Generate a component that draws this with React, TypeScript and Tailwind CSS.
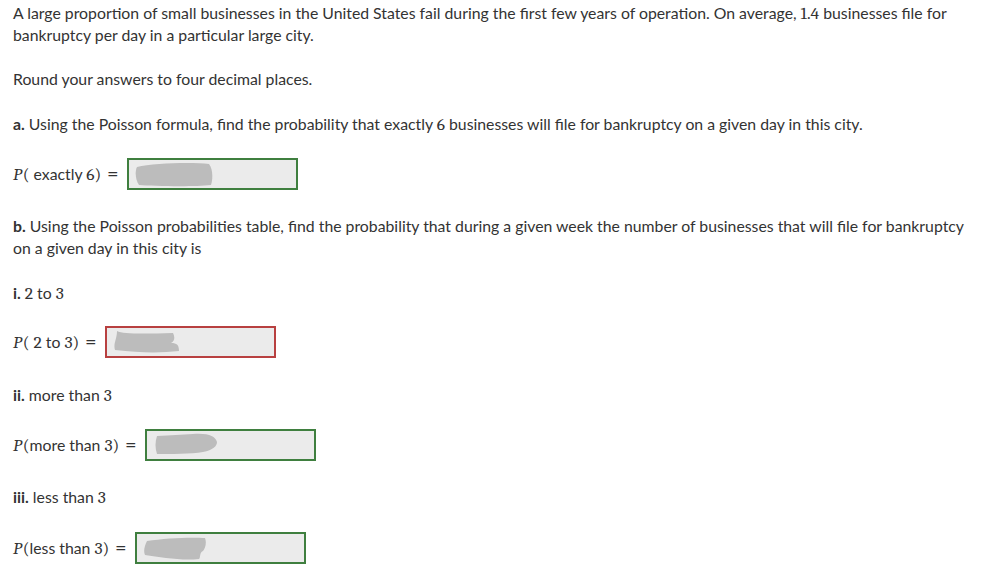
import React from 'react';

type Status = 'ok' | 'bad';

const borderColors: Record<Status, string> = {
  ok: 'border-[#3f7f3f]',
  bad: 'border-[#b84040]',
};

// the redacted answers are grey smudges
const blobs = [
  'M4 6 C20 2 60 1 76 3 C80 8 80 18 78 24 C60 26 20 25 6 24 C2 18 2 10 4 6 Z',
  'M6 2 C12 5 30 5 62 4 C64 8 64 12 60 14 C66 14 68 16 68 22 C50 24 30 24 4 21 C2 15 6 10 6 2 Z',
  'M6 4 C20 3 30 3 42 2 C58 1 64 4 66 10 C66 14 62 18 52 20 C40 22 20 22 6 22 C4 16 4 10 6 4 Z',
  'M6 6 C24 3 50 2 64 3 C66 8 64 14 62 16 C58 18 60 22 58 24 C40 26 20 22 4 20 C2 16 4 10 6 6 Z',
];

function AnswerBox({ status, blob, w }: { status: Status; blob: number; w: number }) {
  return (
    <div
      className={`ml-[9px] flex h-[32px] w-[171px] shrink-0 items-center border-2 bg-[#ebebeb] pl-[4px] ${borderColors[status]}`}
    >
      <svg width={w} height="26" viewBox={`0 0 ${w} 26`} className="blur-[0.6px]">
        <path d={blobs[blob]} fill="#bcbcbc" />
      </svg>
    </div>
  );
}

function Math({ children }: { children: React.ReactNode }) {
  return <span className="font-serif text-[17.5px] leading-none">{children}</span>;
}

function Formula({ label, status, blob, w }: { label: React.ReactNode; status: Status; blob: number; w: number }) {
  return (
    <div className="flex h-[32px] items-center pl-[13px]">
      <span className="whitespace-nowrap">
        <Math>
          <i className="mr-[1px]">P</i>(
        </Math>
        {label}
        <Math>
          )<span className="ml-[6px] text-[20px]">=</span>
        </Math>
      </span>
      <AnswerBox status={status} blob={blob} w={w} />
    </div>
  );
}

export default function App() {
  return (
    <div className="min-h-[585px] w-[989px] bg-white pt-[2px] font-['Lato',sans-serif] text-[15.8px] leading-[22px] text-[#333]">
      <div className="pl-[13px] pr-[18px]">
        <p>
          A large proportion of small businesses in the United States fail during the first few years of operation. On
          average, <Math>1.4</Math> businesses file for bankruptcy per day in a particular large city.
        </p>
        <p className="mt-[22px]">Round your answers to four decimal places.</p>
        <p className="mt-[23px]">
          <b className="font-bold">a.</b> Using the Poisson formula, find the probability that exactly <Math>6</Math>{' '}
          businesses will file for bankruptcy on a given day in this city.
        </p>
      </div>

      <div className="mt-[23px]">
        <Formula
          label={
            <>
              {' '}exactly <Math>6</Math>
            </>
          }
          status="ok"
          blob={0}
          w={82}
        />
      </div>

      <div className="mt-[25px] pl-[13px] pr-[18px]">
        <p>
          <b className="font-bold">b.</b> Using the Poisson probabilities table, find the probability that during a given
          week the number of businesses that will file for bankruptcy on a given day in this city is
        </p>
        <p className="mt-[23px]">
          <b className="font-bold">i.</b> <Math>2</Math> to <Math>3</Math>
        </p>
      </div>

      <div className="mt-[22px]">
        <Formula
          label={
            <>
              {' '}
              <Math>2</Math> to <Math>3</Math>
            </>
          }
          status="bad"
          blob={1}
          w={72}
        />
      </div>

      <p className="mt-[26px] pl-[13px]">
        <b className="font-bold">ii.</b> more than <Math>3</Math>
      </p>

      <div className="mt-[23px]">
        <Formula
          label={
            <>
              more than <Math>3</Math>
            </>
          }
          status="ok"
          blob={2}
          w={68}
        />
      </div>

      <p className="mt-[25px] pl-[13px]">
        <b className="font-bold">iii.</b> less than <Math>3</Math>
      </p>

      <div className="mt-[24px]">
        <Formula
          label={
            <>
              less than <Math>3</Math>
            </>
          }
          status="ok"
          blob={3}
          w={68}
        />
      </div>
    </div>
  );
}
